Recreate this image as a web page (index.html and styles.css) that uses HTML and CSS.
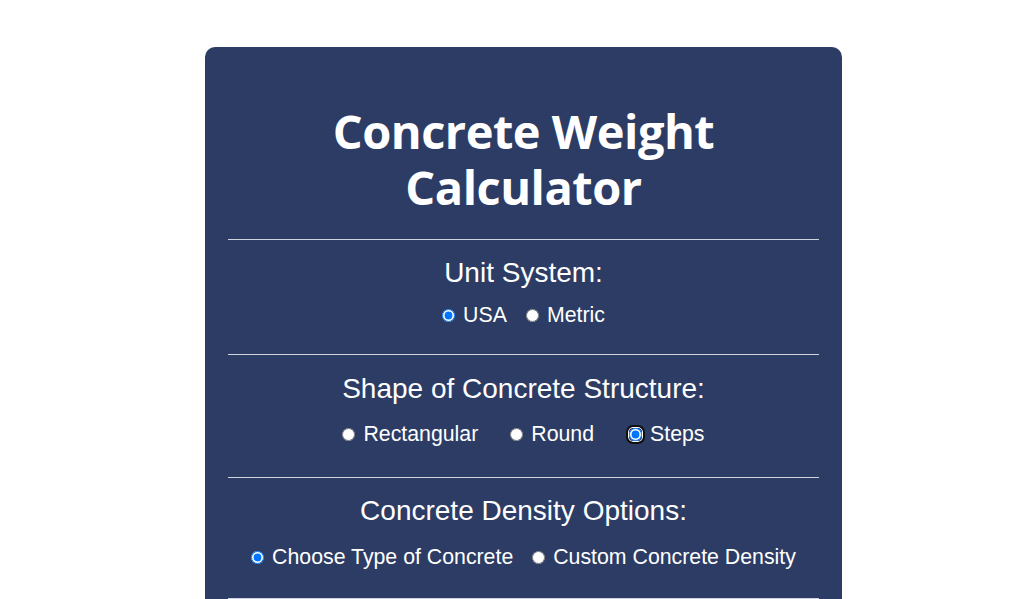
FILE: index.html
```html
<!doctype html>
<html lang="en">
  <head>
    <meta charset="UTF-8" />
    <meta name="viewport" content="width=device-width, initial-scale=1.0" />
    <title>Concrete Weight Calculator</title>
    <link rel="stylesheet" href="styles.css">
  </head>
  <body>
    <div class="calculator">
      <h1>Concrete Weight Calculator</h1>
      <hr class="divider" />

      <div class="section unit">
        <h2>Unit System:</h2>
        <div class="options">
          <label><input type="radio" name="unit" value="usa" checked />USA</label>
          <label><input type="radio" name="unit" value="metric" />Metric</label>
        </div>
      </div>
      <hr class="divider" />

      <div class="section shape">
        <h2>Shape of Concrete Structure:</h2>
        <div class="options wide">
          <label><input type="radio" name="shape" value="rect" />Rectangular</label>
          <label><input type="radio" name="shape" value="round" />Round</label>
          <label>
            <span class="focus-ring"><input type="radio" name="shape" value="steps" checked /></span>Steps
          </label>
        </div>
      </div>
      <hr class="divider" />

      <div class="section density">
        <h2>Concrete Density Options:</h2>
        <div class="options">
          <label><input type="radio" name="density" value="type" checked />Choose Type of Concrete</label>
          <label><input type="radio" name="density" value="custom" />Custom Concrete Density</label>
        </div>
      </div>
      <hr class="divider" />
    </div>
  </body>
</html>
```

FILE: styles.css
```css
body {
  font-family: 'Liberation Sans', Arial, sans-serif;
  margin: 0;
  background-color: white;
  color: white;
}

.calculator {
  width: 591px;
  margin: 47px 0 0 205px;
  padding: 23px 23px 40px;
  background-color: #2c3c65;
  border-radius: 10px;
  text-align: center;
}

.calculator h1 {
  font-family: 'Open Sans', sans-serif;
  font-weight: 700;
  font-size: 47px;
  letter-spacing: -0.5px;
  line-height: 56px;
  margin: 33px 0 24px;
}

.divider {
  margin: 0;
  border: none;
  border-top: 1px solid #d0d4dd;
}

.section {
  padding: 17px 0 27px;
}

.section h2 {
  font-weight: normal;
  font-size: 28px;
  margin: 0 0 14px;
}

.section.shape {
  padding: 18px 0 31px;
}

.section.shape h2 {
  margin-bottom: 17px;
}

.section.density {
  padding-bottom: 29px;
}

.section.density h2 {
  margin-bottom: 18px;
}

.options {
  display: flex;
  justify-content: center;
  gap: 19px;
  font-size: 21.3px;
  line-height: 24px;
}

.options.wide {
  gap: 32px;
}

.options label {
  display: flex;
  align-items: center;
  cursor: pointer;
}

.options input {
  width: 13px;
  height: 13px;
  margin: 0 8px 0 0;
}

.focus-ring {
  display: inline-flex;
  padding: 1px;
  margin-right: 5px;
  border: 2px solid #101010;
  border-radius: 7px;
  box-shadow: inset 0 0 0 1px white;
}

.focus-ring input {
  margin: 0;
}
```
